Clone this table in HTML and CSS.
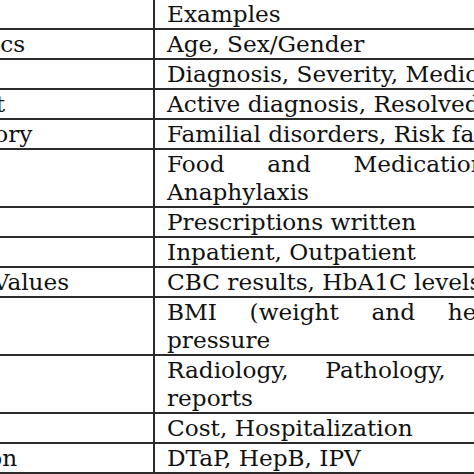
FILE: index.html
```html
<!DOCTYPE html>
<html>
<head>
<meta charset="utf-8">
<link rel="stylesheet" href="styles.css">
</head>
<body>
<table class="data-table">
  <colgroup>
    <col class="col-label">
    <col class="col-examples">
  </colgroup>
  <tr><td class="label">Data Type</td><td class="examples">Examples</td></tr>
  <tr><td class="label">Demographics</td><td class="examples">Age, Sex/Gender</td></tr>
  <tr><td class="label">Diagnosis</td><td class="examples">Diagnosis, Severity, Medical history</td></tr>
  <tr><td class="label">Problem List</td><td class="examples">Active diagnosis, Resolved diagnosis</td></tr>
  <tr><td class="label">Patient History</td><td class="examples">Familial disorders, Risk factors</td></tr>
  <tr><td class="label">Allergies</td><td class="examples">Food and Medication allergies, Anaphylaxis</td></tr>
  <tr><td class="label">Medication</td><td class="examples">Prescriptions written</td></tr>
  <tr><td class="label">Encounters</td><td class="examples">Inpatient, Outpatient</td></tr>
  <tr><td class="label">Laboratory Values</td><td class="examples">CBC results, HbA1C levels</td></tr>
  <tr><td class="label">Vital Signs</td><td class="examples">BMI (weight and height), blood pressure</td></tr>
  <tr><td class="label">Imaging</td><td class="examples">Radiology, Pathology, Microbiology reports</td></tr>
  <tr><td class="label">Billing</td><td class="examples">Cost, Hospitalization</td></tr>
  <tr><td class="label">Immunization</td><td class="examples">DTaP, HepB, IPV</td></tr>
</table>
</body>
</html>
```
FILE: styles.css
```css
html, body {
  margin: 0;
  padding: 0;
  background: #ffffff;
  overflow: hidden;
}

.data-table {
  table-layout: fixed;
  width: 794px;
  border-collapse: separate;
  border-spacing: 0;
  margin-left: -157px;
  font-family: "DejaVu Serif", serif;
  font-size: 23.2px;
  line-height: 28px;
  color: #111111;
}

.col-label {
  width: 312px;
}

.col-examples {
  width: 482px;
}

.data-table td {
  box-sizing: border-box;
  padding: 0;
  vertical-align: top;
  border-bottom: 2px solid #2b2b2b;
}

.data-table td.label {
  padding-left: 12px;
  border-right: 2px solid #2b2b2b;
  white-space: nowrap;
  overflow: hidden;
}

.data-table td.examples {
  padding-left: 12px;
  text-align: justify;
}
```
